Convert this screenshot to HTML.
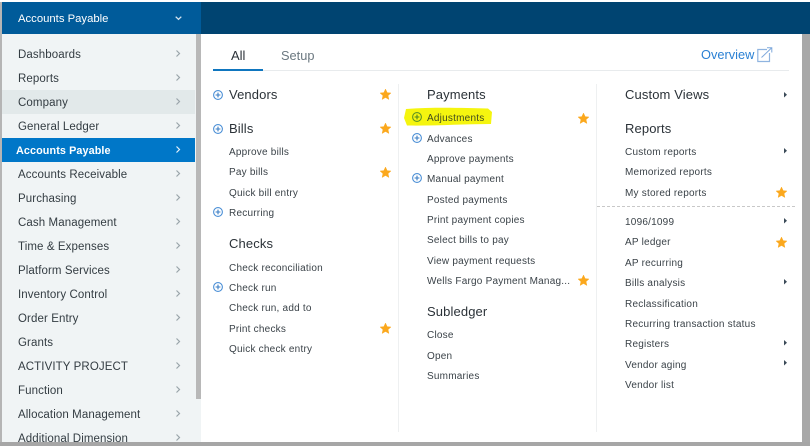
<!DOCTYPE html>
<html><head><meta charset="utf-8">
<style>
html,body{margin:0;padding:0;width:810px;height:445px;overflow:hidden;background:#a6a6a6;font-family:"Liberation Sans",Arial,sans-serif;}
.a{position:absolute;white-space:nowrap;}
.s{left:18px;font-size:11.5px;color:#333c42;line-height:14px;letter-spacing:.1px;margin-top:1px;}
.c{font-size:10px;color:#3a4248;line-height:13px;letter-spacing:.22px;margin-top:1px;}
.h{font-size:13px;color:#2b3238;line-height:16px;letter-spacing:.12px;}
svg{position:absolute;overflow:visible;}
</style></head><body>
<svg width="0" height="0" style="position:absolute"><defs>
<g id="star"><path d="M5.5 0 L7.2 3.6 L11 4 L8.1 6.6 L8.9 10.5 L5.5 8.5 L2.1 10.5 L2.9 6.6 L0 4 L3.8 3.6 Z" fill="#fba81d" stroke="#fba81d" stroke-width=".4" stroke-linejoin="round"/></g>
<g id="plus"><circle cx="5" cy="5" r="4.4" fill="none" stroke="#4b8fd6" stroke-width="1.1"/><path d="M2.6 5H7.4M5 2.6V7.4" stroke="#3a7cc4" stroke-width="1.1"/></g>
<g id="sch"><path d="M0.5 0.5L3.5 3.5L0.5 6.5" fill="none" stroke="#9aa4aa" stroke-width="1.2"/></g>
<g id="tri"><path d="M0 0L3 2.75L0 5.5Z" fill="#3a4a58"/></g>
</defs></svg>

<div class="a" style="left:0;top:0;width:810px;height:2px;background:#fff"></div>
<div class="a" style="left:0;top:2px;width:2px;height:440px;background:#b5b5b5"></div>
<div class="a" style="left:802px;top:34px;width:8px;height:408px;background:#a8a8a8"></div>
<div class="a" style="left:802px;top:2px;width:8px;height:32px;background:#004471"></div>
<div class="a" style="left:2px;top:2px;width:800px;height:32px;background:#004471"></div>
<div class="a" style="left:2px;top:2px;width:199px;height:32px;background:#005b9a"></div>
<div class="a" style="left:18px;top:12px;font-size:11.3px;line-height:14px;color:#fff">Accounts Payable</div>
<svg style="left:175px;top:16px" width="8" height="5"><path d="M0.7 0.7L3.5 3.4L6.3 0.7" fill="none" stroke="#d4e3ee" stroke-width="1.3"/></svg>

<!-- sidebar -->
<div class="a" style="left:2px;top:34px;width:194px;height:408px;background:#f0f4f5"></div>
<div class="a" style="left:196px;top:34px;width:5px;height:365px;background:#b8b8b8"></div>
<div class="a" style="left:196px;top:399px;width:5px;height:43px;background:#f0f4f5"></div>
<div class="a" style="left:2px;top:90px;width:193px;height:24px;background:#e2e9ea"></div>
<div class="a" style="left:2px;top:138px;width:193px;height:24px;background:#0077c8"></div>

<div class="a s" style="top:47px">Dashboards</div>
<div class="a s" style="top:71px">Reports</div>
<div class="a s" style="top:95px">Company</div>
<div class="a s" style="top:119px">General Ledger</div>
<div class="a s" style="left:16px;top:143px;color:#fff;font-weight:bold;font-size:10.8px;letter-spacing:.1px">Accounts Payable</div>
<div class="a s" style="top:167px">Accounts Receivable</div>
<div class="a s" style="top:191px">Purchasing</div>
<div class="a s" style="top:215px">Cash Management</div>
<div class="a s" style="top:239px">Time &amp; Expenses</div>
<div class="a s" style="top:263px">Platform Services</div>
<div class="a s" style="top:287px">Inventory Control</div>
<div class="a s" style="top:311px">Order Entry</div>
<div class="a s" style="top:335px">Grants</div>
<div class="a s" style="top:359px">ACTIVITY PROJECT</div>
<div class="a s" style="top:383px">Function</div>
<div class="a s" style="top:407px">Allocation Management</div>
<div class="a s" style="top:431px">Additional Dimension</div>

<svg style="left:176px;top:50px" width="5" height="7"><use href="#sch"/></svg>
<svg style="left:176px;top:74px" width="5" height="7"><use href="#sch"/></svg>
<svg style="left:176px;top:98px" width="5" height="7"><use href="#sch"/></svg>
<svg style="left:176px;top:122px" width="5" height="7"><use href="#sch"/></svg>
<svg style="left:176px;top:146px" width="5" height="7"><path d="M0.5 0.5L3.5 3.5L0.5 6.5" fill="none" stroke="#e6f1f9" stroke-width="1.2"/></svg>
<svg style="left:176px;top:170px" width="5" height="7"><use href="#sch"/></svg>
<svg style="left:176px;top:194px" width="5" height="7"><use href="#sch"/></svg>
<svg style="left:176px;top:218px" width="5" height="7"><use href="#sch"/></svg>
<svg style="left:176px;top:242px" width="5" height="7"><use href="#sch"/></svg>
<svg style="left:176px;top:266px" width="5" height="7"><use href="#sch"/></svg>
<svg style="left:176px;top:290px" width="5" height="7"><use href="#sch"/></svg>
<svg style="left:176px;top:314px" width="5" height="7"><use href="#sch"/></svg>
<svg style="left:176px;top:338px" width="5" height="7"><use href="#sch"/></svg>
<svg style="left:176px;top:362px" width="5" height="7"><use href="#sch"/></svg>
<svg style="left:176px;top:386px" width="5" height="7"><use href="#sch"/></svg>
<svg style="left:176px;top:410px" width="5" height="7"><use href="#sch"/></svg>
<svg style="left:176px;top:434px" width="5" height="7"><use href="#sch"/></svg>

<!-- main panel -->
<div class="a" style="left:201px;top:34px;width:601px;height:408px;background:#fff"></div>
<div class="a" style="left:213px;top:70px;width:576px;height:1px;background:#e8ebed"></div>
<div class="a" style="left:213px;top:69px;width:50px;height:2px;background:#0f76bf"></div>
<div class="a" style="left:231px;top:48px;font-size:13px;line-height:16px;color:#2b3238">All</div>
<div class="a" style="left:281px;top:48px;font-size:12.8px;line-height:16px;color:#6b7880">Setup</div>
<div class="a" style="left:701px;top:47px;font-size:12.8px;line-height:16px;color:#2a80d4">Overview</div>
<svg style="left:757px;top:47px" width="16" height="15"><path d="M10 2.5H0.8V14.5H12.5V6" fill="none" stroke="#8fb4e0" stroke-width="1.2"/><path d="M4.5 10.5L14.5 1M10 0.8H14.8V5.5" fill="none" stroke="#7fa9dc" stroke-width="1"/></svg>

<div class="a" style="left:398px;top:84px;width:1px;height:348px;background:#eef0f1"></div>
<div class="a" style="left:596px;top:84px;width:1px;height:348px;background:#eef0f1"></div>

<!-- col 1 -->
<svg style="left:213px;top:90px" width="10" height="10"><use href="#plus"/></svg>
<div class="a h" style="left:229px;top:87px">Vendors</div>
<svg style="left:380px;top:89px" width="11" height="11"><use href="#star"/></svg>
<svg style="left:213px;top:124px" width="10" height="10"><use href="#plus"/></svg>
<div class="a h" style="left:229px;top:121px">Bills</div>
<svg style="left:380px;top:123px" width="11" height="11"><use href="#star"/></svg>
<div class="a c" style="left:229px;top:145px">Approve bills</div>
<div class="a c" style="left:229px;top:165px">Pay bills</div>
<svg style="left:380px;top:167px" width="11" height="11"><use href="#star"/></svg>
<div class="a c" style="left:229px;top:186px">Quick bill entry</div>
<svg style="left:213px;top:207px" width="10" height="10"><use href="#plus"/></svg>
<div class="a c" style="left:229px;top:206px">Recurring</div>
<div class="a h" style="left:229px;top:236px">Checks</div>
<div class="a c" style="left:229px;top:261px">Check reconciliation</div>
<svg style="left:213px;top:282px" width="10" height="10"><use href="#plus"/></svg>
<div class="a c" style="left:229px;top:281px">Check run</div>
<div class="a c" style="left:229px;top:301px">Check run, add to</div>
<div class="a c" style="left:229px;top:322px">Print checks</div>
<svg style="left:380px;top:323px" width="11" height="11"><use href="#star"/></svg>
<div class="a c" style="left:229px;top:342px">Quick check entry</div>

<!-- col 2 -->
<div class="a h" style="left:427px;top:87px">Payments</div>
<svg style="left:404px;top:106px" width="90" height="22"><path d="M2 3C30 1 60 2 84 2.5L88 6L87 18C60 18 30 20 3 19.5L0 12Z" fill="#f5f50f"/></svg>
<svg style="left:411.5px;top:112px" width="10" height="10"><circle cx="5" cy="5" r="4.4" fill="none" stroke="#5f9424" stroke-width="1.1"/><path d="M2.6 5H7.4M5 2.6V7.4" stroke="#4f8420" stroke-width="1.1"/></svg>
<div class="a c" style="left:427px;top:111px;color:#3f4a20">Adjustments</div>
<svg style="left:578px;top:113px" width="11" height="11"><use href="#star"/></svg>
<svg style="left:412px;top:133px" width="10" height="10"><use href="#plus"/></svg>
<div class="a c" style="left:427px;top:132px">Advances</div>
<div class="a c" style="left:427px;top:152px">Approve payments</div>
<svg style="left:412px;top:173px" width="10" height="10"><use href="#plus"/></svg>
<div class="a c" style="left:427px;top:172px">Manual payment</div>
<div class="a c" style="left:427px;top:193px">Posted payments</div>
<div class="a c" style="left:427px;top:213px">Print payment copies</div>
<div class="a c" style="left:427px;top:233px">Select bills to pay</div>
<div class="a c" style="left:427px;top:254px">View payment requests</div>
<div class="a c" style="left:427px;top:274px">Wells Fargo Payment Manag...</div>
<svg style="left:578px;top:275px" width="11" height="11"><use href="#star"/></svg>
<div class="a h" style="left:427px;top:304px">Subledger</div>
<div class="a c" style="left:427px;top:328px">Close</div>
<div class="a c" style="left:427px;top:349px">Open</div>
<div class="a c" style="left:427px;top:369px">Summaries</div>

<!-- col 3 -->
<div class="a h" style="left:625px;top:87px">Custom Views</div>
<svg style="left:784px;top:92px" width="4" height="6"><use href="#tri"/></svg>
<div class="a h" style="left:625px;top:121px">Reports</div>
<div class="a c" style="left:625px;top:145px">Custom reports</div>
<svg style="left:784px;top:148px" width="4" height="6"><use href="#tri"/></svg>
<div class="a c" style="left:625px;top:165px">Memorized reports</div>
<div class="a c" style="left:625px;top:186px">My stored reports</div>
<svg style="left:776px;top:187px" width="11" height="11"><use href="#star"/></svg>
<div class="a" style="left:597px;top:206px;width:198px;height:0;border-top:1px dashed #c8c8c8"></div>
<div class="a c" style="left:625px;top:215px">1096/1099</div>
<svg style="left:784px;top:218px" width="4" height="6"><use href="#tri"/></svg>
<div class="a c" style="left:625px;top:235px">AP ledger</div>
<svg style="left:776px;top:237px" width="11" height="11"><use href="#star"/></svg>
<div class="a c" style="left:625px;top:256px">AP recurring</div>
<div class="a c" style="left:625px;top:276px">Bills analysis</div>
<svg style="left:784px;top:279px" width="4" height="6"><use href="#tri"/></svg>
<div class="a c" style="left:625px;top:297px">Reclassification</div>
<div class="a c" style="left:625px;top:317px">Recurring transaction status</div>
<div class="a c" style="left:625px;top:337px">Registers</div>
<svg style="left:784px;top:340px" width="4" height="6"><use href="#tri"/></svg>
<div class="a c" style="left:625px;top:358px">Vendor aging</div>
<svg style="left:784px;top:360px" width="4" height="6"><use href="#tri"/></svg>
<div class="a c" style="left:625px;top:378px">Vendor list</div>

<div class="a" style="left:0;top:442px;width:810px;height:3px;background:#a6a6a6"></div>
</body></html>
